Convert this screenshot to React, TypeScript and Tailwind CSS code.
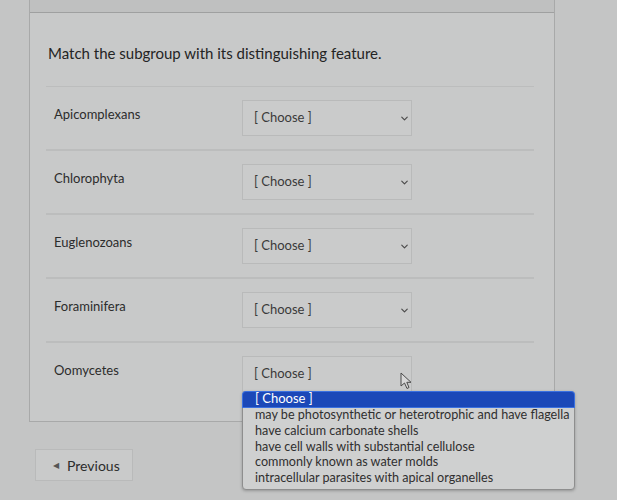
import { ChevronDown } from 'lucide-react'

const ROWS = ['Apicomplexans', 'Chlorophyta', 'Euglenozoans', 'Foraminifera', 'Oomycetes']

const OPTIONS = [
  'may be photosynthetic or heterotrophic and have flagella',
  'have calcium carbonate shells',
  'have cell walls with substantial cellulose',
  'commonly known as water molds',
  'intracellular parasites with apical organelles',
]

function Select({ open }: { open?: boolean }) {
  return (
    <div className="relative">
      <div className="w-[170px] h-[36px] border border-[#b9baba] bg-[#cacbcb] flex items-center justify-between pl-[11px] pr-[1px]">
        <span className="text-[13px] text-[#3a3a3a]">[ Choose ]</span>
        {!open && <ChevronDown size={11} strokeWidth={2.5} className="text-[#4a4a4a]" />}
      </div>
      {open && (
        <>
          <svg className="absolute left-[158px] top-[16px]" width="14" height="18" viewBox="0 0 14 18">
            <path d="M1 1 L1 14 L4.5 11 L7 16.5 L9 15.5 L6.8 10.3 L11 10.3 Z" fill="#d8d8d8" stroke="#4a4a4a" strokeWidth="1" />
          </svg>
          <div className="absolute left-0 top-[35px] w-[333px] border border-[#8e8e8e] rounded-[4px] bg-[#cfd0d0] shadow-[0_1px_3px_rgba(0,0,0,0.25)] pb-[3px] z-10">
            <div className="bg-[#1b48b8] text-white text-[13px] leading-[13px] h-[15px] pl-[12px] rounded-t-[3px] ring-1 ring-[#3a70e0]">
              [ Choose ]
            </div>
            {OPTIONS.map((o) => (
              <div key={o} className="text-[12.6px] leading-[15.8px] text-[#2f2f2f] pl-[12px] whitespace-nowrap">
                {o}
              </div>
            ))}
          </div>
        </>
      )}
    </div>
  )
}

export default function App() {
  return (
    <div className="w-[617px] h-[500px] bg-[#c4c5c5] overflow-hidden font-['Lato','Noto_Sans',sans-serif] text-[#2c2c2c]">
      <div className="ml-[29px] w-[526px] border-l border-r border-b border-[#a8a9a9] bg-[#c8c9c9]">
        <div className="h-[13px] bg-[#bfc0c0] border-b border-[#9fa0a0]" />
        <div className="px-[16px]">
          <p className="pl-[2px] pt-[29px] h-[73px] text-[15px] text-[#242424]">
            Match the subgroup with its distinguishing feature.
          </p>
          {ROWS.map((r, i) => (
            <div
              key={r}
              className={`flex items-start pt-[13px] ${i === ROWS.length - 1 ? 'h-[79px]' : 'h-[64px] border-b border-[#bcbdbd]'} border-t border-t-[#bcbdbd] mr-[4px]`}
            >
              <div className="w-[196px] pl-[8px] pt-[5px] text-[13px] text-[#2c2c2c]">{r}</div>
              <Select open={i === ROWS.length - 1} />
            </div>
          ))}
        </div>
      </div>
      <div className="ml-[35px] mt-[27px] w-[98px] h-[32px] border border-[#b9baba] bg-[#c9caca] flex items-center pl-[17px] gap-[8px]">
        <span className="text-[8px] text-[#555]">◀</span>
        <span className="text-[14px] text-[#2c2c2c]">Previous</span>
      </div>
    </div>
  )
}
